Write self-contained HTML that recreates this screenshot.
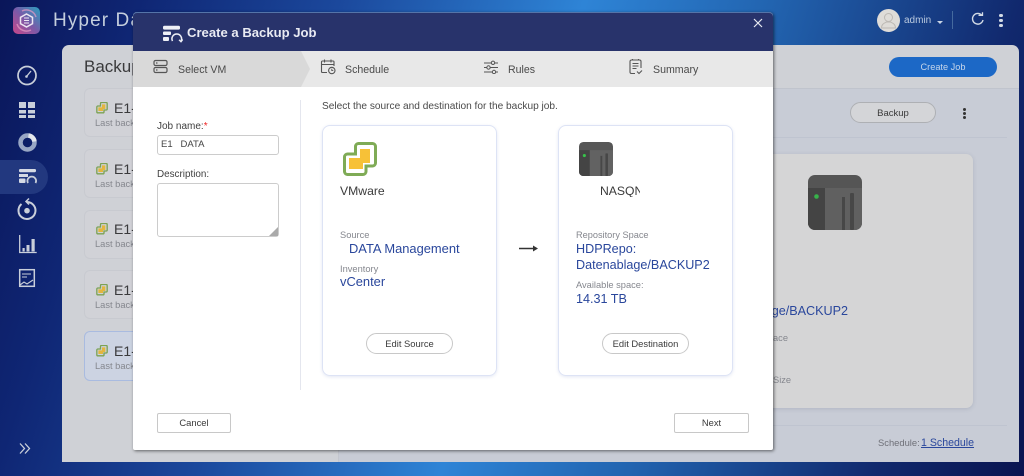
<!DOCTYPE html>
<html><head><meta charset="utf-8"><style>
html,body{margin:0;padding:0}
#p{position:relative;width:1024px;height:476px;overflow:hidden;font-family:"Liberation Sans",sans-serif;background:linear-gradient(107deg,#0a1659 0%,#0f2674 12%,#1b489c 29%,#2e84d6 50%,#2264b0 66%,#11296e 87%,#0a1450 100%)}
.a,.t{position:absolute}
.t{white-space:nowrap;line-height:1}
.card{position:absolute;left:84px;width:270px;height:49px;background:#d1d2d7;border:1px solid #c8cad0;border-radius:6px;box-sizing:border-box}
.btn{position:absolute;box-sizing:border-box;text-align:center;border:1px solid #c8c8c8;background:#fff;color:#3a3a3a;font-size:9.4px}
.blue{color:#2a479c}
.gray{color:#85878e}
.step{color:#4a4a4a;font-size:10.6px}
</style></head><body><div id="p">

<!-- app logo -->
<svg class="a" style="left:13px;top:7px" width="28" height="27" viewBox="0 0 28 27"><defs><linearGradient id="lg" x1="0" y1="1" x2="1" y2="0"><stop offset="0" stop-color="#c9478a"/><stop offset=".5" stop-color="#7a5aa8"/><stop offset="1" stop-color="#2a9fc0"/></linearGradient></defs><rect width="27" height="27" rx="5" fill="url(#lg)"/><path d="M4 17a10 10 0 0 0 14 6M23 10A10 10 0 0 0 9 4" fill="none" stroke="#e79ac4" stroke-width="1.500" opacity=".7"/><path d="M13.500 7l6 3.300v6.400l-6 3.300-6-3.300v-6.400z" fill="none" stroke="#ece6f2" stroke-width="1.500"/><path d="M11 11h5M11 13.500h5M11 16h5" stroke="#ece6f2" stroke-width="1.100"/></svg>
<div class="t" style="left:53px;top:11px;font-size:19px;letter-spacing:1.1px;color:#c4cedd">Hyper Data</div>

<!-- sidebar -->
<div class="a" style="left:0;top:160px;width:48px;height:34px;background:#22387f;border-radius:0 17px 17px 0"></div>
<svg class="a" style="left:14px;top:62px" width="28" height="230" viewBox="0 0 28 230" fill="none" stroke="#c9cfda" stroke-width="2">
<circle cx="13" cy="13.500" r="9" stroke-width="1.700"/><path d="M12.500 14.500l4.500-5.500" stroke-width="1.300"/><circle cx="12.500" cy="14.500" r="1.300" fill="#c9cfda" stroke="none"/>
<g fill="#c9cfda" stroke="none"><rect x="5" y="40" width="7" height="6"/><rect x="14" y="40" width="7" height="6"/><rect x="5" y="48" width="7" height="3.500"/><rect x="14" y="48" width="7" height="3.500"/><rect x="5" y="53" width="7" height="3"/><rect x="14" y="53" width="7" height="3"/></g>
<circle cx="13.500" cy="80.500" r="7" stroke-width="4.500" stroke="#98a6c4"/><path d="M14.500 73.500a7 7 0 0 1 6 6" stroke-width="4.500" stroke="#e4e7ec"/>
<g fill="#d5dae4" stroke="none"><rect x="5" y="107" width="17" height="3.200" rx="1.200"/><rect x="5" y="112" width="9" height="3"/><rect x="5" y="116.500" width="6.500" height="4.500" rx="1"/></g><path d="M14 121a4.300 4.300 0 1 1 7.500 0" stroke-width="1.800"/>
<path d="M7.500 142a8.500 8.500 0 1 0 5.500-2" stroke-width="2"/><path d="M15 136.500l-3 3 3 3" stroke-width="1.500"/><circle cx="13" cy="148.700" r="2.800" fill="#c9cfda" stroke="none"/>
<path d="M5.700 173v17.500h17" stroke-width="1.300"/><g fill="#c9cfda" stroke="none"><rect x="8.500" y="186" width="2.200" height="3.500"/><rect x="12.500" y="183" width="3" height="6.500"/><rect x="17.500" y="177" width="3.200" height="12.500"/></g>
<rect x="5.700" y="207.700" width="14.600" height="16.600" stroke-width="1.500"/><path d="M8 212h9M8 215h5" stroke-width="1.100"/><path d="M6 223l4-3 3 2 6-4" stroke-width="1.100"/>
</svg>
<svg class="a" style="left:19px;top:443px" width="12" height="11" viewBox="0 0 12 11" fill="none" stroke="#c9cfda" stroke-width="1.300"><path d="M1 .5l4.500 5L1 10.500M6 .5l4.500 5-4.500 5"/></svg>

<!-- main panel -->
<div class="a" style="left:62px;top:45px;width:957px;height:417px;background:#cfd1d6;border-radius:7px 7px 0 0"></div>
<div class="a" style="left:338px;top:88px;width:681px;height:374px;background:#c8ccd6;border-left:1px solid #c3c6ce;box-sizing:border-box"></div>
<div class="a" style="left:338px;top:88px;width:681px;height:1px;background:#c0c4cd"></div>
<div class="t" style="left:84px;top:58px;font-size:17px;color:#3a3a3c">Backup</div>
<div class="a" style="left:889px;top:57px;width:108px;height:20px;background:#1c68c6;border-radius:10px"></div>
<div class="t" style="left:889px;top:63px;width:108px;text-align:center;font-size:9.200px;color:#c6d6ea">Create Job</div>
<div class="a" style="left:850px;top:102px;width:86px;height:21px;background:#d4d5d8;border:1px solid #aeb0b4;border-radius:11px;box-sizing:border-box"></div>
<div class="t" style="left:850px;top:109px;width:86px;text-align:center;font-size:9.500px;color:#3a3a3a">Backup</div>
<div class="a" style="left:963px;top:108px;width:3px;height:3px;border-radius:50%;background:#333;box-shadow:0 4px #333,0 8px #333"></div>
<div class="a" style="left:700px;top:137px;width:307px;height:1px;background:#bfc4d0"></div>
<div class="a" style="left:700px;top:154px;width:273px;height:254px;background:#d5d5d6;border-radius:7px;box-shadow:0 1px 4px rgba(80,90,120,.2)"></div>
<svg class="a" style="left:808px;top:175px" width="54" height="55" viewBox="0 0 54 55"><rect width="54" height="55" rx="7" fill="#555"/><path d="M17 13h37v35a7 7 0 0 1-7 7H17z" fill="#606060"/><path d="M0 13h17v42H7a7 7 0 0 1-7-7z" fill="#444"/><rect x="34" y="22" width="3" height="33" fill="#474747"/><rect x="42" y="18" width="4" height="37" rx="1" fill="#474747"/><circle cx="8.500" cy="21.500" r="2.300" fill="#37b34a"/></svg>
<div class="t blue" style="left:748px;top:305px;font-size:12.600px;width:100px;text-align:right;">ge/BACKUP2</div>
<div class="t gray" style="left:773px;top:334px;font-size:9.300px">ace</div>
<div class="t gray" style="left:773px;top:376px;font-size:9.300px">Size</div>
<div class="a" style="left:700px;top:425px;width:307px;height:1px;background:#bfc4d0"></div>
<div class="t" style="left:878px;top:438px;font-size:9.400px;color:#6f7078">Schedule:</div>
<div class="t blue" style="left:921px;top:438px;font-size:10.600px;text-decoration:underline">1 Schedule</div>
<!-- list -->
<div class="card" style="top:88px"></div><div class="card" style="top:149px"></div><div class="card" style="top:210px"></div><div class="card" style="top:270px"></div>
<div class="card" style="top:331px;height:50px;background:#ccd3e2;border-color:#a9bbe0"></div>
<svg width="0" height="0" class="a"><defs><g id="vm"><path d="M13.500 12V4.500a3 3 0 0 1 3-3H30.500a3 3 0 0 1 3 3V21a3 3 0 0 1-3 3H24v5.500a3 3 0 0 1-3 3H5.500a3 3 0 0 1-3-3V15a3 3 0 0 1 3-3z" fill="none" stroke="#7ca253" stroke-width="4"/><rect x="18" y="7" width="10" height="14" fill="#e3b63f"/><rect x="7" y="16" width="14" height="11" fill="#e3b63f"/></g></defs></svg>
<svg class="a" style="left:96px;top:102px" width="12" height="12" viewBox="0 0 36 36"><use href="#vm"/></svg>
<svg class="a" style="left:96px;top:163px" width="12" height="12" viewBox="0 0 36 36"><use href="#vm"/></svg>
<svg class="a" style="left:96px;top:223px" width="12" height="12" viewBox="0 0 36 36"><use href="#vm"/></svg>
<svg class="a" style="left:96px;top:284px" width="12" height="12" viewBox="0 0 36 36"><use href="#vm"/></svg>
<svg class="a" style="left:96px;top:345px" width="12" height="12" viewBox="0 0 36 36"><use href="#vm"/></svg>
<div class="t" style="left:114px;top:101px;font-size:14px;color:#3a3a3c">E1-</div><div class="t gray" style="left:95px;top:119px;font-size:9.300px">Last back</div>
<div class="t" style="left:114px;top:162px;font-size:14px;color:#3a3a3c">E1-</div><div class="t gray" style="left:95px;top:180px;font-size:9.300px">Last back</div>
<div class="t" style="left:114px;top:222px;font-size:14px;color:#3a3a3c">E1-</div><div class="t gray" style="left:95px;top:240px;font-size:9.300px">Last back</div>
<div class="t" style="left:114px;top:283px;font-size:14px;color:#3a3a3c">E1-</div><div class="t gray" style="left:95px;top:301px;font-size:9.300px">Last back</div>
<div class="t" style="left:114px;top:344px;font-size:14px;color:#3a3a3c">E1-</div><div class="t gray" style="left:95px;top:362px;font-size:9.300px">Last back</div>

<!-- top right -->
<div class="a" style="left:877px;top:9px;width:23px;height:23px;border-radius:50%;background:#dfdcd8"></div>
<svg class="a" style="left:877px;top:9px" width="23" height="23" viewBox="0 0 23 23" fill="none" stroke="#bdb9b4"><circle cx="11.500" cy="8.500" r="4"/><path d="M4.500 19c0-4 3-5 5-6h4c2 1 5 2 5 6z"/></svg>
<div class="t" style="left:904px;top:16px;font-size:10px;color:#b9c9de">admin</div>
<div class="a" style="left:937px;top:21px;border:3px solid transparent;border-top-color:#c9d5e5;border-bottom:0"></div>
<div class="a" style="left:952px;top:11px;width:1px;height:18px;background:#456a9e"></div>
<svg class="a" style="left:970px;top:12px" width="15" height="15" viewBox="0 0 15 15" fill="none" stroke="#d3dbe6" stroke-width="1.400"><path d="M12 3.500A5.300 5.300 0 1 0 13 8"/><path d="M8.500 3.300h4v-3" stroke-width="1.300"/></svg>
<div class="a" style="left:999px;top:14px;width:4px;height:3px;border-radius:2px;background:#d3dbe6;box-shadow:0 5px #d3dbe6,0 10px #d3dbe6"></div>

<!-- modal -->
<div class="a" style="left:133px;top:12px;width:640px;height:438px;background:#fff;border-radius:4px 4px 2px 2px;box-shadow:1px 1px 3px rgba(0,0,0,.55)"></div>
<div class="a" style="left:133px;top:12px;width:640px;height:39px;background:#28336b;border-radius:4px 4px 0 0;box-shadow:inset 0 1px 0 #5574a8"></div>
<svg class="a" style="left:163px;top:25px" width="20" height="18" viewBox="0 0 20 18"><g fill="#eef0f6"><rect x="0" y="0.800" width="17" height="3.800" rx="1.500"/><rect x="0" y="6.500" width="8" height="3.500" rx="1"/><rect x="0" y="12" width="6" height="4" rx="1"/></g><path d="M9.500 16a4.800 4.800 0 1 1 8.500 0" fill="none" stroke="#eef0f6" stroke-width="1.500"/><path d="M16 14.800l2 2 1.800-2.300" fill="none" stroke="#eef0f6" stroke-width="1.200"/></svg>
<div class="t" style="left:187px;top:26px;font-size:13.100px;font-weight:bold;color:#e9ebf3">Create a Backup Job</div>
<svg class="a" style="left:753px;top:18px" width="10" height="10" viewBox="0 0 10 10" stroke="#e8eaf2" stroke-width="1.200"><path d="M1 1l8 8M9 1l-8 8"/></svg>
<!-- steps -->
<div class="a" style="left:133px;top:51px;width:640px;height:36px;background:#e8e8e8"></div>
<div class="a" style="left:133px;top:51px;width:177px;height:36px;background:#d9d9d9;clip-path:polygon(0 0,168px 0,100% 50%,168px 100%,0 100%)"></div>
<svg class="a" style="left:153px;top:59px" width="17" height="15" viewBox="0 0 17 15" fill="none" stroke="#555" stroke-width="1.200"><rect x="1" y="1.500" width="13" height="5" rx="1.500"/><rect x="1" y="8.500" width="13" height="5" rx="1.500"/><path d="M3 4h1.500M3 11h1.500"/></svg>
<div class="t step" style="left:178px;top:65px">Select VM</div>
<svg class="a" style="left:320px;top:59px" width="17" height="16" viewBox="0 0 17 16" fill="none" stroke="#555" stroke-width="1.100"><path d="M7 13.500H2.500a1 1 0 0 1-1-1V3a1 1 0 0 1 1-1H13a1 1 0 0 1 1 1v4"/><path d="M1.500 5.500H14M4.500.5v3M11 .5v3"/><circle cx="11.800" cy="11.500" r="3.200"/><path d="M11.800 9.800v1.800h1.500" stroke-width=".9"/></svg>
<div class="t step" style="left:345px;top:65px">Schedule</div>
<svg class="a" style="left:483px;top:60px" width="16" height="14" viewBox="0 0 16 14" fill="none" stroke="#555" stroke-width="1"><path d="M1 3h7M12 3h3M1 7.500h2.500M7.500 7.500H15M1 12h8M13 12h2"/><circle cx="10" cy="2.800" r="1.700"/><circle cx="5.500" cy="7.500" r="1.700"/><circle cx="11" cy="12" r="1.700"/></svg>
<div class="t step" style="left:508px;top:65px">Rules</div>
<svg class="a" style="left:629px;top:59px" width="14" height="16" viewBox="0 0 14 16" fill="none" stroke="#555" stroke-width="1.100"><path d="M6 14.500H2.500a1.500 1.500 0 0 1-1.500-1.500V2.500A1.500 1.500 0 0 1 2.500 1h8A1.500 1.500 0 0 1 12 2.500V9"/><path d="M3.500 1V0M9.500 1V0M3.500 4.500h6M3.500 7h6M3.500 9.500h4"/><path d="M8 12.500l2 2 3-3"/></svg>
<div class="t step" style="left:653px;top:65px">Summary</div>
<!-- left form -->
<div class="a" style="left:300px;top:100px;width:1px;height:290px;background:#e4e6ee"></div>
<div class="t" style="left:157px;top:122px;font-size:10px;color:#3f3f3f">Job name:<span style="color:#e22">*</span></div>
<div class="a" style="left:157px;top:135px;width:122px;height:20px;border:1px solid #ccc;border-radius:3px;box-sizing:border-box"></div>
<div class="t" style="left:161px;top:140px;font-size:9.500px;color:#444;white-space:pre">E1   DATA</div>
<div class="t" style="left:157px;top:170px;font-size:9.900px;color:#3f3f3f">Description:</div>
<div class="a" style="left:157px;top:183px;width:122px;height:54px;border:1px solid #ccc;border-radius:3px;box-sizing:border-box"></div>
<svg class="a" style="left:269px;top:227px" width="9" height="9" viewBox="0 0 9 9" fill="#aaa"><path d="M9 0v9H0z"/></svg>
<div class="t" style="left:322px;top:102px;font-size:10.150px;color:#4a4a4a">Select the source and destination for the backup job.</div>
<!-- source card -->
<div class="a" style="left:322px;top:125px;width:175px;height:251px;border:1px solid #dde3f5;border-radius:8px;box-sizing:border-box;box-shadow:0 1px 3px rgba(120,140,200,.2)"></div>
<svg class="a" style="left:342px;top:142px" width="36" height="36" viewBox="0 0 36 36"><path d="M13.500 12V4.500a3 3 0 0 1 3-3H30.500a3 3 0 0 1 3 3V21a3 3 0 0 1-3 3H24v5.500a3 3 0 0 1-3 3H5.500a3 3 0 0 1-3-3V15a3 3 0 0 1 3-3z" fill="none" stroke="#7fab56" stroke-width="3"/><rect x="18" y="7" width="10" height="14" fill="#f7c137"/><rect x="7" y="16" width="14" height="11" fill="#f7c137"/></svg>
<div class="t" style="left:340px;top:185px;font-size:12.200px;color:#3b3b3b">VMware</div>
<div class="t gray" style="left:340px;top:231px;font-size:9.300px">Source</div>
<div class="t blue" style="left:349px;top:243px;font-size:12.900px">DATA Management</div>
<div class="t gray" style="left:340px;top:265px;font-size:9.300px">Inventory</div>
<div class="t blue" style="left:340px;top:276px;font-size:12.900px">vCenter</div>
<div class="btn" style="left:366px;top:333px;width:87px;height:21px;line-height:20px;border-radius:11px">Edit Source</div>
<svg class="a" style="left:519px;top:244px" width="19" height="9" viewBox="0 0 19 9"><path d="M0 4.500h16" stroke="#333" stroke-width="1.500"/><path d="M19 4.500l-5-3v6z" fill="#333"/></svg>
<!-- dest card -->
<div class="a" style="left:558px;top:125px;width:175px;height:251px;border:1px solid #dde3f5;border-radius:8px;box-sizing:border-box;box-shadow:0 1px 3px rgba(120,140,200,.2)"></div>
<svg class="a" style="left:579px;top:142px" width="34" height="34" viewBox="0 0 54 54"><rect width="54" height="54" rx="7" fill="#575757"/><path d="M17 13h37v34a7 7 0 0 1-7 7H17z" fill="#626262"/><path d="M0 13h17v41H7a7 7 0 0 1-7-7z" fill="#444"/><rect x="34" y="22" width="3" height="32" fill="#474747"/><rect x="42" y="18" width="4" height="36" rx="1" fill="#474747"/><circle cx="8.500" cy="21.500" r="2.500" fill="#37c34a"/></svg>
<div class="t" style="left:600px;top:185px;width:40px;overflow:hidden;font-size:12.200px;color:#3b3b3b">NASQNAP</div>
<div class="t gray" style="left:576px;top:231px;font-size:9.200px">Repository Space</div>
<div class="t blue" style="left:576px;top:243px;font-size:12.600px">HDPRepo:</div>
<div class="t blue" style="left:576px;top:259px;font-size:12.600px">Datenablage/BACKUP2</div>
<div class="t gray" style="left:576px;top:281px;font-size:9.300px">Available space:</div>
<div class="t blue" style="left:576px;top:293px;font-size:12.600px">14.31 TB</div>
<div class="btn" style="left:602px;top:333px;width:87px;height:21px;line-height:20px;border-radius:11px">Edit Destination</div>
<!-- footer -->
<div class="btn" style="left:157px;top:413px;width:74px;height:20px;line-height:18px;border-radius:2px">Cancel</div>
<div class="btn" style="left:674px;top:413px;width:75px;height:20px;line-height:18px;border-radius:2px">Next</div>
</div></body></html>
